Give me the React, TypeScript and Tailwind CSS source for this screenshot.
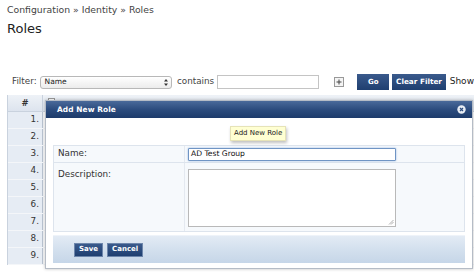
import React from "react";

const rows = ["1.", "2.", "3.", "4.", "5.", "6.", "7.", "8.", "9."];

export default function App() {
  return (
    <div className="relative w-[474px] h-[272px] overflow-hidden bg-white font-['DejaVu_Sans',Verdana,sans-serif] text-[#333]">
      <div className="pl-[7px] pt-[4px] text-[9.3px] leading-[12px] text-[#444]">
        Configuration » Identity » Roles
      </div>
      <div className="pl-[7px] mt-[5px] text-[13px] leading-[16px] text-[#222]">Roles</div>

      {/* filter row */}
      <div className="mt-[37px] flex items-center h-[16px] text-[8.8px] text-[#444]">
        <span className="ml-[12px]">Filter:</span>
        <div className="ml-[3px] w-[136px] h-[13px] rounded-[3px] border border-[#b8b8b8] bg-gradient-to-b from-white to-[#ececec] flex items-center justify-between pl-[4px] pr-[2px] text-[7.5px] text-[#222]">
          <span>Name</span>
          <svg width="6" height="9" viewBox="0 0 6 9">
            <path d="M1 3.5 L3 1 L5 3.5 Z M1 5.5 L3 8 L5 5.5 Z" fill="#333" />
          </svg>
        </div>
        <span className="ml-[5px]">contains</span>
        <div className="ml-[3px] w-[105px] h-[14px] border border-[#c4c4c4] bg-white" />
        <div className="ml-[15px] w-[10px] h-[10px] border border-[#999] bg-[#f4f4f4] flex items-center justify-center">
          <svg width="8" height="8" viewBox="0 0 8 8">
            <path d="M4 1.5 V6.5 M1.5 4 H6.5" stroke="#444" strokeWidth="1" />
          </svg>
        </div>
        <div className="ml-[13px] w-[33px] h-[16px] bg-gradient-to-b from-[#3a5a8c] to-[#1f3f70] text-white font-bold text-[7px] flex items-center justify-center">
          Go
        </div>
        <div className="ml-[3px] w-[55px] h-[16px] bg-gradient-to-b from-[#3a5a8c] to-[#1f3f70] text-white font-bold text-[7.3px] flex items-center justify-center whitespace-nowrap">
          Clear Filter
        </div>
        <span className="ml-[4px] whitespace-nowrap text-[9px] text-[#222]">Show</span>
      </div>

      {/* table behind */}
      <div className="mt-[5px] ml-[7px] w-[467px] border-l border-[#c9d2de]">
        <div className="h-[17px] flex bg-gradient-to-b from-[#eef2f7] to-[#dde4ee] border-b border-[#c9d2de] text-[8.5px] font-bold text-[#333]">
          <div className="w-[34px] flex items-center justify-center">#</div>
          <div className="w-[2px] border-l border-[#c9d2de]" />
          <div className="flex-1 flex items-start pl-[4px] pt-[3px] gap-[20px]">
            <div className="w-[7px] h-[7px] border border-[#999] bg-white" />
            <span>Name</span>
            <span className="ml-[160px]">Description</span>
          </div>
        </div>
        {rows.map((r) => (
          <div key={r} className="h-[17px] flex border-b border-[#f4f6f9]">
            <div className="w-[34px] bg-[#e6ecf4] flex items-center justify-end pr-[3px] text-[8.8px] text-[#333]">
              {r}
            </div>
            <div className="w-[2px] border-l border-[#b9c3d0] bg-[#f2f4f7]" />
            <div className="flex-1 bg-white" />
          </div>
        ))}
      </div>

      {/* dialog */}
      <div className="absolute left-[45px] top-[100px] w-[428px] h-[169px] bg-white border border-[#b5bcc6] shadow-[0_0_3px_rgba(0,0,0,0.25)] flex flex-col">
        <div className="h-[17px] bg-gradient-to-b from-[#4a6a9a] via-[#2c4c7e] to-[#1d3b6b] flex items-center justify-between pl-[11px] pr-[6px]">
          <span className="text-white font-bold text-[7.4px] tracking-[0.1px]">Add New Role</span>
          <svg width="9" height="9" viewBox="0 0 9 9">
            <circle cx="4.5" cy="4.5" r="4.2" fill="#e8edf4" />
            <path d="M3 3 L6 6 M6 3 L3 6" stroke="#2c4c7e" strokeWidth="1.2" />
          </svg>
        </div>
        <div className="relative flex-1 px-[7px] pt-[27px]">
          {/* tooltip */}
          <div className="absolute left-[184px] top-[8px] h-[15px] px-[3px] bg-[#ffffd2] border border-[#e6e3b8] shadow-[1px_2px_3px_rgba(0,0,0,0.25)] text-[7px] text-[#222] flex items-center whitespace-nowrap">
            Add New Role
          </div>

          {/* form table */}
          <div className="w-[412px] border border-[#dde4ed] bg-[#f6f9fc] text-[8.8px] text-[#333]">
            <div className="h-[17px] flex border-b border-[#dde4ed]">
              <div className="w-[131px] pl-[4px] flex items-center border-r border-[#e4e9f0]">Name:</div>
              <div className="flex-1 flex items-center pl-[3px]">
                <div className="w-[208px] h-[13px] border-[1.5px] border-[#6f94c4] rounded-[1px] bg-white shadow-[0_0_2px_#8fb0dc] flex items-center pl-[2px] text-[7.6px] text-[#111]">
                  AD Test Group
                </div>
              </div>
            </div>
            <div className="h-[68px] flex">
              <div className="w-[131px] pl-[4px] pt-[5px] border-r border-[#e4e9f0]">Description:</div>
              <div className="flex-1 pl-[3px] pt-[6px]">
                <div className="relative w-[208px] h-[58px] border border-[#b9b9b9] bg-white">
                  <svg className="absolute right-[1px] bottom-[1px]" width="6" height="6" viewBox="0 0 6 6">
                    <path d="M1 5.5 L5.5 1 M3 5.5 L5.5 3" stroke="#999" strokeWidth="0.8" />
                  </svg>
                </div>
              </div>
            </div>
          </div>

          {/* button bar */}
          <div className="mt-[3px] w-[412px] h-[28px] bg-gradient-to-b from-[#e3ebf5] via-[#d3e0ee] to-[#c6d6e8] border-t border-[#eef3f9] flex items-center pl-[21px] gap-[4px]">
            <div className="h-[14px] px-[4px] bg-gradient-to-b from-[#3a5a8c] to-[#1f3f70] border border-[#6d86ab] text-white font-bold text-[7px] flex items-center">
              Save
            </div>
            <div className="h-[14px] px-[4px] bg-gradient-to-b from-[#3a5a8c] to-[#1f3f70] border border-[#6d86ab] text-white font-bold text-[7px] flex items-center">
              Cancel
            </div>
          </div>
        </div>
      </div>
    </div>
  );
}
